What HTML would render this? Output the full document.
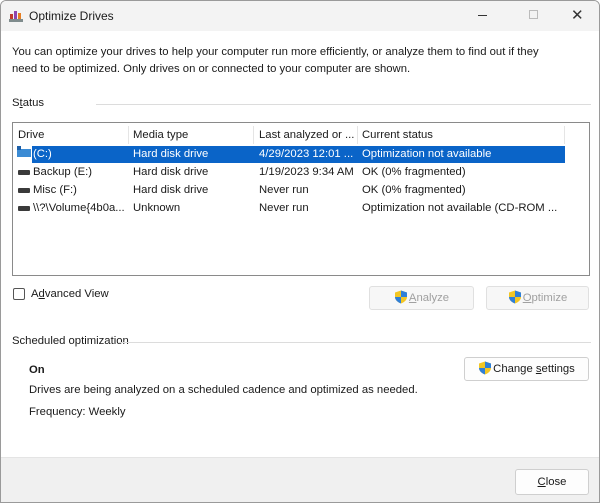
<!DOCTYPE html>
<html><head><meta charset="utf-8"><style>
*{margin:0;padding:0;box-sizing:border-box}
body{width:600px;height:503px;background:#fff;font-family:"Liberation Sans",sans-serif;font-size:11.3px;color:#1a1a1a;position:relative;overflow:hidden}
.a{position:absolute;white-space:nowrap}
.win{position:absolute;left:0;top:0;width:600px;height:503px;border:1px solid #9a9a9a;border-radius:6px 6px 0 0;overflow:hidden;background:#fff}
.title{position:absolute;left:0;top:0;width:600px;height:30px;background:#f3f3f3}
.footer{position:absolute;left:0;top:456px;width:600px;height:47px;background:#f0f0f0;border-top:1px solid #e4e4e4}
.btn{position:absolute;border:1px solid #cfcfcf;border-radius:3px;background:#fdfdfd;text-align:center;line-height:22px}
.btn svg{vertical-align:-3px;margin-right:1px}
.dis{color:#a0a0a0;border-color:#e0e0e0;background:#f7f7f7}
.line{position:absolute;height:1px;background:#dcdcdc}
.list{position:absolute;left:11px;top:121px;width:578px;height:154px;border:1px solid #8a8a8a}
.sep{position:absolute;top:3px;width:1px;height:18px;background:#e5e5e5}
.drv{position:absolute;width:12px;height:5px;background:#3a3a3a;border-radius:1px}
</style></head><body>
<svg width="0" height="0" style="position:absolute"><defs><symbol id="sh" viewBox="0 0 14 14"><path d="M7 0.5 L13 2.5 V7 C13 10 10 12.5 7 13.5 C4 12.5 1 10 1 7 V2.5 Z" fill="#f3c623"/><path d="M7 0.5 L13 2.5 V7 H7 Z" fill="#2f7fd8"/><path d="M1 7 H7 V13.5 C4 12.5 1 10 1 7 Z" fill="#2f7fd8"/></symbol></defs></svg>
<div class="win">
<div class="title"></div>
<svg class="a" style="left:8px;top:8px" width="14" height="14"><rect x="1" y="5" width="3" height="8" fill="#c0392b"/><rect x="5" y="2" width="3" height="11" fill="#8e44ad"/><rect x="9" y="4" width="3" height="9" fill="#e67e22"/><rect x="0" y="10" width="14" height="3" fill="#7f8c8d"/></svg>
<div class="a" style="left:28px;top:8px;font-size:12px">Optimize Drives</div>
<div class="a" style="left:477px;top:14px;width:9px;height:1px;background:#333"></div>
<div class="a" style="left:528px;top:9px;width:9px;height:9px;border:1px solid #bbb"></div>
<div class="a" style="left:570px;top:5px;font-size:15px;color:#333">✕</div>

<div class="a" style="left:11px;top:43px;line-height:17px">You can optimize your drives to help your computer run more efficiently, or analyze them to find out if they<br>need to be optimized. Only drives on or connected to your computer are shown.</div>
<div class="a" style="left:11px;top:96px">S<u>t</u>atus</div>
<div class="line" style="left:95px;top:103px;width:495px"></div>

<div class="list">
<div class="a" style="left:5px;top:6px">Drive</div>
<div class="a" style="left:120px;top:6px">Media type</div>
<div class="a" style="left:246px;top:6px">Last analyzed or ...</div>
<div class="a" style="left:349px;top:6px">Current status</div>
<div class="sep" style="left:115px"></div><div class="sep" style="left:240px"></div><div class="sep" style="left:344px"></div><div class="sep" style="left:551px"></div>
<div class="a" style="left:19px;top:23px;width:533px;height:17px;background:#0a64c8"></div>
<div class="a" style="left:4px;top:26px;width:14px;height:8px;background:#3b8bd4"></div><div class="a" style="left:4px;top:23px;width:4px;height:4px;background:#1d5fa8"></div>
<div class="a" style="left:20px;top:25px;color:#fff">(C:)</div>
<div class="a" style="left:120px;top:25px;color:#fff">Hard disk drive</div>
<div class="a" style="left:246px;top:25px;color:#fff">4/29/2023 12:01 ...</div>
<div class="a" style="left:349px;top:25px;color:#fff">Optimization not available</div>
<div class="drv" style="left:5px;top:47px"></div>
<div class="a" style="left:20px;top:43px">Backup (E:)</div><div class="a" style="left:120px;top:43px">Hard disk drive</div><div class="a" style="left:246px;top:43px">1/19/2023 9:34 AM</div><div class="a" style="left:349px;top:43px">OK (0% fragmented)</div>
<div class="drv" style="left:5px;top:65px"></div>
<div class="a" style="left:20px;top:61px">Misc (F:)</div><div class="a" style="left:120px;top:61px">Hard disk drive</div><div class="a" style="left:246px;top:61px">Never run</div><div class="a" style="left:349px;top:61px">OK (0% fragmented)</div>
<div class="drv" style="left:5px;top:83px"></div>
<div class="a" style="left:20px;top:79px">\\?\Volume{4b0a...</div><div class="a" style="left:120px;top:79px">Unknown</div><div class="a" style="left:246px;top:79px">Never run</div><div class="a" style="left:349px;top:79px">Optimization not available (CD-ROM ...</div>
</div>

<div class="a" style="left:12px;top:287px;width:12px;height:12px;border:1px solid #555;border-radius:2px"></div>
<div class="a" style="left:30px;top:287px">A<u>d</u>vanced View</div>
<div class="btn dis" style="left:368px;top:285px;width:105px;height:24px"><svg width="14" height="14"><use href="#sh"/></svg><u>A</u>nalyze</div>
<div class="btn dis" style="left:485px;top:285px;width:103px;height:24px"><svg width="14" height="14"><use href="#sh"/></svg><u>O</u>ptimize</div>

<div class="a" style="left:11px;top:334px">Scheduled optimization</div>
<div class="line" style="left:118px;top:341px;width:472px"></div>
<div class="a" style="left:28px;top:363px;font-weight:bold">On</div>
<div class="a" style="left:28px;top:383px">Drives are being analyzed on a scheduled cadence and optimized as needed.</div>
<div class="a" style="left:28px;top:405px">Frequency: Weekly</div>
<div class="btn" style="left:463px;top:356px;width:125px;height:24px"><svg width="14" height="14"><use href="#sh"/></svg>Change <u>s</u>ettings</div>

<div class="footer"></div>
<div class="btn" style="left:514px;top:468px;width:74px;height:26px;line-height:24px"><u>C</u>lose</div>
</div>
</body></html>
